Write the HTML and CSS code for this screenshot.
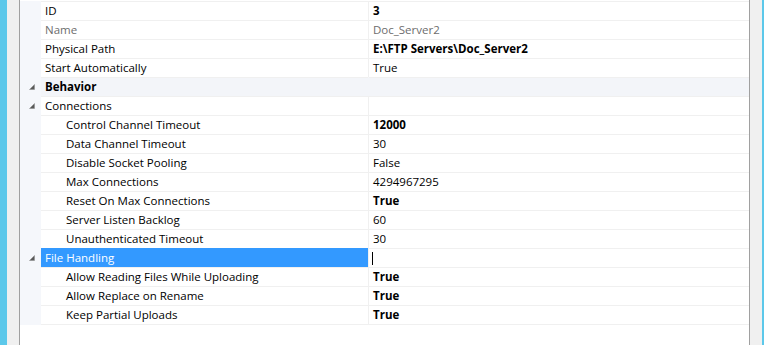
FILE: index.html
```html
<!DOCTYPE html>
<html>
<head>
<meta charset="utf-8">
<link rel="stylesheet" href="styles.css">
</head>
<body>
<div class="frame">
  <div class="edge-cyan"></div>
  <div class="edge-gray"></div>
  <div class="grid">
    <div class="row"><div class="ind"></div><div class="name">ID</div><div class="val b">3</div></div>
    <div class="row"><div class="ind"></div><div class="name ro">Name</div><div class="val ro">Doc_Server2</div></div>
    <div class="row"><div class="ind"></div><div class="name">Physical Path</div><div class="val b">E:\FTP Servers\Doc_Server2</div></div>
    <div class="row"><div class="ind"></div><div class="name">Start Automatically</div><div class="val">True</div></div>
    <div class="row cat"><div class="ind"><svg class="exp" width="6" height="6" viewBox="0 0 6 6"><polygon points="5.5,0.5 5.5,5.5 0.5,5.5" /></svg></div><div class="name b">Behavior</div><div class="val"></div></div>
    <div class="row"><div class="ind"><svg class="exp" width="6" height="6" viewBox="0 0 6 6"><polygon points="5.5,0.5 5.5,5.5 0.5,5.5" /></svg></div><div class="name">Connections</div><div class="val"></div></div>
    <div class="row"><div class="ind"></div><div class="name sub">Control Channel Timeout</div><div class="val b">12000</div></div>
    <div class="row"><div class="ind"></div><div class="name sub">Data Channel Timeout</div><div class="val">30</div></div>
    <div class="row"><div class="ind"></div><div class="name sub">Disable Socket Pooling</div><div class="val">False</div></div>
    <div class="row"><div class="ind"></div><div class="name sub">Max Connections</div><div class="val">4294967295</div></div>
    <div class="row"><div class="ind"></div><div class="name sub">Reset On Max Connections</div><div class="val b">True</div></div>
    <div class="row"><div class="ind"></div><div class="name sub">Server Listen Backlog</div><div class="val">60</div></div>
    <div class="row"><div class="ind"></div><div class="name sub">Unauthenticated Timeout</div><div class="val">30</div></div>
    <div class="row"><div class="ind"><svg class="exp" width="6" height="6" viewBox="0 0 6 6"><polygon points="5.5,0.5 5.5,5.5 0.5,5.5" /></svg></div><div class="name sel">File Handling</div><div class="val"><span class="caret"></span></div></div>
    <div class="row"><div class="ind"></div><div class="name sub">Allow Reading Files While Uploading</div><div class="val b">True</div></div>
    <div class="row"><div class="ind"></div><div class="name sub">Allow Replace on Rename</div><div class="val b">True</div></div>
    <div class="row"><div class="ind"></div><div class="name sub">Keep Partial Uploads</div><div class="val b">True</div></div>
  </div>
  <div class="edge-gray right"></div>
  <div class="edge-cyan thin"></div>
  <div class="tail"></div>
</div>
</body>
</html>
```

FILE: styles.css
```css
html, body {
  margin: 0;
  padding: 0;
  background: #ffffff;
}
body {
  font-family: "Open Sans", "Noto Sans", sans-serif;
  font-size: 11.5px;
  color: #000000;
}
.frame {
  display: flex;
  height: 345px;
  width: 767px;
  overflow: hidden;
}
.edge-cyan {
  width: 7px;
  background: #5cc8ea;
  flex: none;
}
.edge-cyan.thin {
  width: 2px;
}
.edge-gray {
  width: 12px;
  background: #f0f0f0;
  border-right: 1px solid #a0a0a0;
  flex: none;
}
.edge-gray.right {
  border-right: none;
  border-left: 1px solid #a0a0a0;
}
.tail {
  width: 3px;
  flex: none;
  background: #ffffff;
}
.grid {
  width: 729px;
  flex: none;
  padding-top: 1px;
  display: flex;
  flex-direction: column;
}
.row {
  display: grid;
  grid-template-columns: 21px 327px 1px 1fr;
  height: 19px;
}
.row > .ind {
  background: #f5f7fb;
  display: flex;
  align-items: flex-start;
  justify-content: flex-start;
}
.row > .name {
  border-top: 1px solid #f0f0f0;
  padding-left: 4px;
  line-height: 17px;
  white-space: nowrap;
}
.row > .val {
  grid-column: 4;
  border-top: 1px solid #f0f0f0;
  padding-left: 4px;
  line-height: 17px;
  white-space: nowrap;
  position: relative;
}
.row::after {
  content: "";
  grid-column: 3;
  grid-row: 1;
  background: #f0f0f0;
}
.row > .name { grid-column: 2; grid-row: 1; }
.row > .val { grid-row: 1; }
.row > .ind { grid-column: 1; grid-row: 1; }
.row:last-child > .name,
.row:last-child > .val {
  border-bottom: 1px solid #f0f0f0;
}
.row:last-child {
  height: 20px;
}
.cat > .name,
.cat > .val {
  background: #f3f5f9;
}
.cat::after {
  background: #f3f5f9;
}
.sub {
  padding-left: 25px !important;
}
.b {
  font-weight: 700;
}
.ro {
  color: #6d6d6d;
}
.sel {
  background: #3399ff;
  color: #ffffff;
  border-top-color: #3399ff !important;
}
.exp {
  margin-left: 9px;
  margin-top: 7px;
  fill: #595959;
  stroke: #8a8a8a;
  stroke-width: 0.5;
}
.caret {
  position: absolute;
  left: 3px;
  top: 3px;
  width: 1px;
  height: 13px;
  background: #000000;
}
```
